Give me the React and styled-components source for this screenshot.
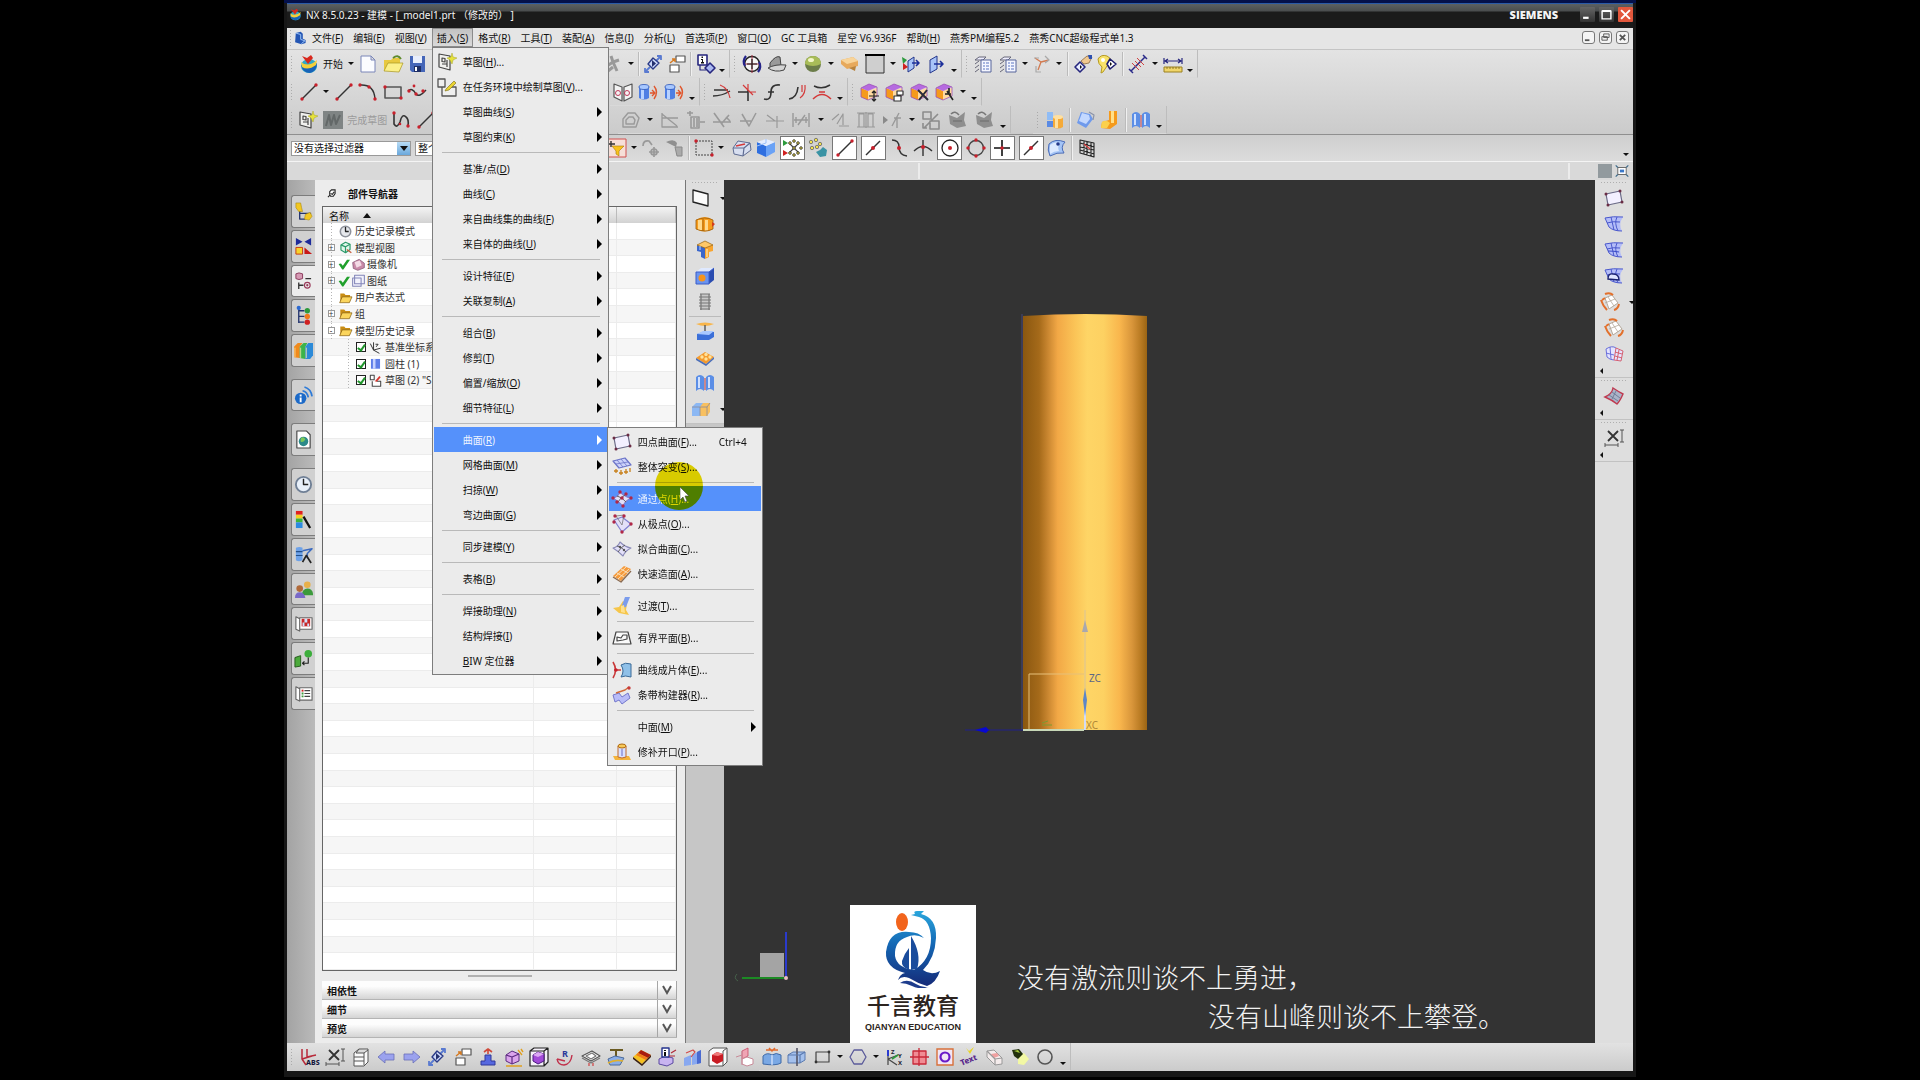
import styled, { createGlobalStyle } from "styled-components";

const GlobalStyle = createGlobalStyle`
  * {
    box-sizing: border-box;
  }
  body {
    margin: 0;
    background: #000;
    color: #111;
    font-family: "Noto Sans", "Noto Sans CJK SC", sans-serif;
    font-size: 10px;
  }
  button, select, input {
    font: inherit;
    color: inherit;
    margin: 0;
  }
`;

/* ---------- icons ---------- */

const Svg = styled.svg`
  display: block;
  flex: none;
  overflow: visible;
  width: ${(p) => p.$size || 20}px;
  height: ${(p) => p.$size || 20}px;
`;

const L = ({ d, c = "#333", f = "none", w = 1.2 }) => (
  <path d={d} stroke={c} fill={f} strokeWidth={w} strokeLinejoin="round" />
);
const Dot = ({ x, y, c = "#c8202c", r = 1.7 }) => <circle cx={x} cy={y} r={r} fill={c} />;

const sheet = "M2 6 16 3 18 14 4 17Z";
const cube = "M3 6 10 2 17 5V13L10 18 3 14Z";

const Pages = () => (
  <>
    <L d="M2 6 6 3H13L10 6ZM2 10 6 7M2 14 6 11M2 18 6 15" c="#667" f="#eef" w={1} />
    <L d="M8 6H18V18H8Z" c="#56659a" f="#f4f6ff" w={1} />
    <L d="M10 9H12M13 9H16M10 12H12M13 12H16M10 15H12M13 15H16" c="#5a74c0" w={1} />
  </>
);

const PurpleBox = ({ children }) => (
  <>
    <path d="M1 6 8 9V18L1 15Z" fill="#f59a1c" />
    <path d="M8 9 17 6V14L8 18Z" fill="#ffd9a0" />
    <path d="M1 6 9 2 17 5 8 9Z" fill="#b66be0" />
    <L d="M1 6 9 2 17 5 17 14 8 18 1 15Z" c="#9a4fb8" w={0.8} />
    {children}
  </>
);

const Diamond = ({ c = "#7f7fd0", children }) => (
  <>
    <L d="M1 9Q6 8 8 3Q13 8 19 9Q13 12 11 17Q6 12 1 9Z" c={c} f="#e3e0f8" w={1.1} />
    <L d="M5 7Q10 8 14 13M13 6Q9 8 6 13" c="#555" w={0.9} />
    {children}
  </>
);

const BlueSheet = ({ children }) => (
  <>
    <path d="M1 4Q9 2 19 3Q14 10 18 17Q9 17 5 13Z" fill="#b4bdf8" />
    <L d="M1 4Q9 2 19 3M3 9Q9 7 16 8M5 13Q9 17 18 17M1 4 5 13M7 3 10 16M13 3Q10 9 14 17" c="#4a58cc" w={1} />
    {children}
  </>
);

const Cylinder = () => (
  <>
    <path d="M1 5V16Q6 19 11 16V5Z" fill="#4f7fe4" />
    <path d="M3 5V17H6V5Z" fill="#b8d2ff" />
    <ellipse cx="6" cy="5" rx="5" ry="2.500" fill="#a8c8ff" stroke="#2c56b8" strokeWidth="0.8" />
    <L d="M12 11H17M14 8 17 11 14 14" c="#e0562c" w={1.4} />
    <L d="M16 4Q21 10 16 17" c="#e0562c" w={1.4} />
  </>
);

const art = {
  nx: (
    <>
      <ellipse cx="10" cy="12" rx="8" ry="7" fill="#2fa8c8" />
      <path d="M2 11Q9 17 18 9Q18 17 11 19Q4 19 2 11Z" fill="#1763b8" />
      <path d="M2 8Q9 14 18 6L17 11Q9 17 3 13Z" fill="#f3cf3a" />
      <path d="M3 2 8 4 12 1 14 4 9 10Z" fill="#d8281e" />
    </>
  ),
  part: (
    <>
      <path d="M4 3 11 1 14 4V11L18 13V17L12 19 3 16Z" fill="#2456b4" />
      <path d="M4 3 11 5V12L17 14L12 18" fill="none" stroke="#9cc4f8" strokeWidth="1.4" />
    </>
  ),
  newFile: <L d="M3 2H13L17 6V18H3ZM13 2V6H17" c="#7a86b8" f="#fbfcff" w={1} />,
  open: (
    <>
      <path d="M1 6H8L10 4H17V17H1Z" fill="#e8c940" />
      <path d="M1 17 5 9H20L16 18Z" fill="#fbf08a" stroke="#a89520" strokeWidth="0.7" />
      <L d="M10 4Q15 0 18 5" c="#5e8a2c" w={1.8} />
    </>
  ),
  save: (
    <>
      <path d="M3 2H18V18H5L3 16Z" fill="#4566b8" />
      <path d="M6 2H15V9H6Z" fill="#e8eefc" />
      <path d="M7 12H14V18H7Z" fill="#1e2f66" />
      <path d="M8 13H10V17H8Z" fill="#fff" />
    </>
  ),
  gear: <L d="M6 2 8 8 2 12M8 8 14 6M8 8 12 17M3 17 8 13" c="#999" w={3} />,
  link: (
    <>
      <L d="M2 18 7 13M13 7 18 2M14 2H18V6M2 14V18H6" c="#5a7ad0" w={1.8} />
      <L d="M10 4 16 9 10 15 5 10Z" c="#2a3a86" f="#cdd8fa" w={1.4} />
      <path d="M9 6 13 9.500 9 13Z" fill="#24306e" />
    </>
  ),
  boxes: (
    <>
      <L d="M9 2H18V8H9ZM3 11H12V18H3Z" c="#555" f="#fff" />
      <L d="M3 9 8 5M5 5H8V8" c="#d67a20" w={1.4} />
    </>
  ),
  info: (
    <>
      <L d="M2 1H11V11H2Z" c="#26267e" f="#fff" w={1.6} />
      <path d="M5 5H7V8H8V9.500H5V8H6V6H5ZM5.500 2.500H7V4H5.500Z" fill="#111" />
      <L d="M4 11V16H10" c="#26267e" />
      <L d="M14 9 19 14 14 19 9 14Z" c="#26267e" f="#aab8f0" w={1.6} />
    </>
  ),
  target: (
    <>
      <circle cx="10" cy="10" r="7.500" fill="#f5f5f5" stroke="#222" strokeWidth="1.500" />
      <L d="M10 1V19M1 10H19" c="#a33040" w={1} />
      <L d="M10 5V15M5 10H15" c="#222" w={1.2} />
      <L d="M4 2Q0 7 3 12M16 18Q20 13 17 8" c="#24248a" w={2.2} />
    </>
  ),
  hat: (
    <>
      <path d="M3 9Q9 1 13 3L14 12 3 13Z" fill="#9a9a9a" stroke="#444" />
      <path d="M1 14Q8 10 19 11L17 16Q8 19 1 14Z" fill="#d4d4d4" stroke="#444" />
    </>
  ),
  sphere: (
    <>
      <circle cx="10" cy="10" r="8" fill="#6c7d4a" />
      <path d="M2 10A8 8 0 0 1 18 10Q10 14 2 10Z" fill="#a8bc58" />
      <ellipse cx="8" cy="6" rx="3" ry="2" fill="#f2f6c8" />
    </>
  ),
  board: (
    <>
      <path d="M2 6 14 3 19 7V12L8 15 2 10Z" fill="#e7a95c" />
      <path d="M2 6 14 3 19 7 8 10Z" fill="#f8d49a" />
      <path d="M10 14 17 12 16 17Z" fill="#b8823c" />
    </>
  ),
  background: (
    <>
      <path d="M1 1H19V19H1Z" fill="#cfcfcf" stroke="#333" />
      <path d="M0 0H20V2H0Z" fill="#000" />
    </>
  ),
  doorIn: (
    <>
      <path d="M7 7 13 3V14L7 18Z" fill="#a8c4f8" stroke="#22348a" />
      <path d="M1 3 6 6 2 10Z" fill="#2c9a3c" />
      <path d="M2 9 7 13 2 16Z" fill="#d02020" />
      <L d="M11 9H18M15 6 18 9 15 12" c="#1c2f9a" w={1.6} />
    </>
  ),
  door: (
    <>
      <path d="M4 6 11 2V15L4 19Z" fill="#a8c4f8" stroke="#22348a" />
      <L d="M8 10H17M14 7 17 10 14 13" c="#1c2f9a" w={1.6} />
    </>
  ),
  layers: <Pages />,
  wcs: (
    <>
      <L d="M6 16 9 8 17 6M9 8 3 4" c="#d27a50" w={1.3} />
      <L d="M2 4H7M13 2 17 6 13 9M4 12V18H9" c="#a9a9a9" w={1.2} />
    </>
  ),
  hand: (
    <>
      <path d="M8 7 14 2 19 3 16 9 11 10Z" fill="#f0c890" stroke="#8a6a40" strokeWidth="0.8" />
      <path d="M15 1 19 1V5L16 5Z" fill="#2c50b0" />
      <L d="M7 8 12 13 7 18 2 13Z" c="#26267e" f="#e8edff" w={1.6} />
      <path d="M7 11 9 13 7 15Z" fill="#111" />
    </>
  ),
  bulb: (
    <>
      <path d="M1 5Q4 0 10 2Q14 4 14 7L10 12 6 18 4 19 5 13Q1 10 1 5Z" fill="#f8e26a" stroke="#b59a20" />
      <L d="M13 5 19 10 13 15 10 10Z" c="#1c1c6e" f="#fff" w={1.6} />
      <path d="M13 8 15 10 13 12Z" fill="#111" />
      <circle cx="6" cy="6" r="2" fill="#fff" />
    </>
  ),
  measure: (
    <>
      <L d="M3 17 17 3M1 15 5 19M15 1 19 5" c="#2c2c8a" w={1.5} />
      <L d="M4 9 11 16M7 7 13 13M9 4 16 11" c="#d04040" w={1} />
    </>
  ),
  ruler: (
    <>
      <L d="M1 4V10M19 4V10M2 7H18M5 5 2 7 5 9M15 5 18 7 15 9" c="#26267e" w={1.2} />
      <path d="M1 13H19V18H1Z" fill="#f0d56a" stroke="#9a8020" />
      <L d="M4 13V15M7 13V15M10 13V15M13 13V15M16 13V15" c="#7a6418" w={0.8} />
    </>
  ),
  line: (
    <>
      <L d="M3 17 17 3" w={1.5} />
      <Dot x={3} y={17} />
      <Dot x={17} y={3} />
    </>
  ),
  arc: (
    <>
      <L d="M2 3Q16 2 17 17" w={1.5} />
      <Dot x={2} y={3} />
      <Dot x={11} y={5} />
      <Dot x={17} y={17} />
    </>
  ),
  rect: (
    <>
      <L d="M2 5H18V16H2Z" c="#555" w={1.6} />
      <Dot x={2} y={5} />
      <Dot x={18} y={16} />
    </>
  ),
  spline: (
    <>
      <L d="M1 9Q5 5 9 12Q12 16 19 8" w={1.4} />
      <Dot x={2} y={9} />
      <Dot x={9} y={12} />
      <Dot x={7} y={4} r={1.4} />
      <Dot x={16} y={9} />
    </>
  ),
  mirror: (
    <>
      <L d="M1 2 9 5V19L1 15ZM11 5 19 2V15L11 19Z" c="#555" f="#f3f3f3" />
      <circle cx="5" cy="11" r="2.500" fill="none" stroke="#c03a5a" />
      <circle cx="14" cy="11" r="2.500" fill="none" stroke="#c03a5a" />
    </>
  ),
  cylinder: <Cylinder />,
  trimA: (
    <>
      <L d="M1 14Q10 14 18 9M2 8H16" w={1.4} />
      <L d="M8 3Q16 6 18 16" c="#d43a3a" />
    </>
  ),
  trimB: (
    <>
      <L d="M1 10H11M11 8V19" w={1.6} />
      <L d="M6 3 16 13M11 2V9M12 10H19" c="#d43a3a" />
    </>
  ),
  curveS: <L d="M2 17Q9 19 9 10Q9 2 18 3M6 10H12" w={1.6} />,
  offset: (
    <>
      <L d="M2 17Q10 16 11 5" w={1.6} />
      <L d="M15 3V10M18 3Q19 12 13 16" c="#d43a3a" />
    </>
  ),
  bridge: (
    <>
      <L d="M2 4Q10 8 18 3" w={1.5} />
      <L d="M1 17Q10 8 19 17M7 10H13" c="#d43a3a" w={1.5} />
    </>
  ),
  boxMove: (
    <PurpleBox>
      <L d="M14 9V19M9 14H19M12 11 14 9 16 11M12 17 14 19 16 17" c="#222" w={1.2} />
    </PurpleBox>
  ),
  boxRect: (
    <PurpleBox>
      <L d="M12 9H18V13H12ZM9 14H16V19H9Z" c="#333" f="#fff" />
    </PurpleBox>
  ),
  boxCut: (
    <PurpleBox>
      <L d="M8 8 18 18M17 8 9 18" c="#2a2a3a" w={2} />
    </PurpleBox>
  ),
  boxWand: (
    <PurpleBox>
      <L d="M12 9 18 18M10 12H16M14 6V11" c="#222" w={1.6} />
    </PurpleBox>
  ),
  sketch: (
    <>
      <L d="M2 2 13 4V18L2 15ZM5 6 8 6.500V10L5 9.500ZM5 12H10M10 8V15" c="#444" f="#f0f0ee" w={1.2} />
      <path d="M15 1 16 5 20 6 16 8 15 12 13 8 10 6 14 5Z" fill="#e6e23a" stroke="#a9a520" strokeWidth="0.5" />
    </>
  ),
  sketchTask: (
    <>
      <L d="M1 2H8V10H1ZM5 10V19H19V10H12" c="#555" f="#efefef" w={1.3} />
      <path d="M9 12 17 4 19 6 12 13 8 14Z" fill="#e9d332" stroke="#776a10" strokeWidth="0.6" />
    </>
  ),
  finish: (
    <>
      <path d="M0 1H20V19H0Z" fill="#7f8484" />
      <L d="M3 16 6 5 8 15 11 5 13 14 17 5" c="#636868" w={2} />
    </>
  ),
  zigzag: (
    <>
      <L d="M2 4V14Q5 19 8 12Q10 3 14 7Q17 9 16 16" w={1.6} />
      <Dot x={2} y={3} />
      <Dot x={16} y={16} />
      <Dot x={8} y={14} r={1.3} />
    </>
  ),
  polyG: <L d="M2 17V9L7 3H14L18 8 15 17ZM5 14V10L8 7H12L14 10 13 14Z" c="#9a9a9a" w={1.4} />,
  angleG: <L d="M2 3V17H18M2 4 17 16M2 8H18" c="#999" w={1.3} />,
  blockG: <L d="M5 7H13V18H5ZM14 12H19M1 3H7M4 1V6M8 8V17M11 8V17" c="#999" w={1.6} />,
  cutG: <L d="M2 3 12 17M1 12H19M17 5 10 13M14 7 18 11" c="#999" w={1.6} />,
  trimG: <L d="M3 4 10 16 17 3M1 11H12" c="#999" w={1.5} />,
  extG: <L d="M2 5 10 11M1 11H19M12 6V18" c="#999" w={1.2} />,
  dimG: <L d="M2 3V17M18 3V17M3 10H17M5 7V13M15 7V13M7 15 14 5" c="#999" w={1.4} />,
  perpG: <L d="M2 10 9 4M7 14 13 4V15M9 16H19" c="#999" w={1.2} />,
  frameG: <L d="M3 4H8V17H3ZM12 4H17V17H12ZM1 3H19M10 2V18M1 17H19" c="#999" w={1.2} />,
  symG: (
    <>
      <path d="M1 6 6 10 1 14Z" fill="#8a8a8a" />
      <L d="M10 16 17 3M15 8V18M12 8H19" c="#999" w={1.4} />
    </>
  ),
  gridG: <L d="M2 2H10V9H2ZM9 11H18V19H9ZM3 18 17 4M2 13V18H6" c="#8c8c8c" w={1.6} />,
  carG: (
    <>
      <path d="M2 5 10 8 18 2 17 10 19 16 10 18 3 14Z" fill="#8e8e8e" />
      <L d="M4 4Q8 0 12 5M6 11H15" c="#777" w={1.6} />
    </>
  ),
  orangeBlue: (
    <>
      <path d="M2 2H8V10H2Z" fill="#8fbcf6" />
      <path d="M2 11H9V17H2Z" fill="#5a8ae4" />
      <path d="M8 7H18V17Q13 20 8 17Z" fill="#f5aa38" />
      <path d="M10 8H13V18H10Z" fill="#ffdf9c" />
      <ellipse cx="13" cy="7" rx="5" ry="2" fill="#ffe0a0" />
    </>
  ),
  blueTilt: (
    <>
      <path d="M5 2 14 4 17 9 10 18 1 13Z" fill="#6f9aec" />
      <path d="M6 3 13 5 14 9 10 14 3 11Z" fill="#c3d8ff" />
      <L d="M13 2 18 5 17 10" c="#8a93a8" />
    </>
  ),
  orangeBoot: (
    <>
      <path d="M9 1H17V14L10 19 1 18 2 12 9 10Z" fill="#f59a1c" />
      <path d="M11 1H14V13H11Z" fill="#ffe08a" />
      <path d="M2 12Q6 9 10 13L7 18 1 18Z" fill="#fbd04c" />
    </>
  ),
  bluePair: (
    <>
      <path d="M1 4Q5 0 9 4V18Q5 14 1 18Z" fill="#5b8ee6" />
      <path d="M11 4Q15 0 19 4V18Q15 14 11 18Z" fill="#5b8ee6" />
      <path d="M3 4H5V15H3ZM13 4H15V15H13Z" fill="#cfe0ff" />
      <path d="M9 5H11V17H9Z" fill="#bfc6d6" />
      <L d="M10 5V17" c="#d04a4a" w={1} />
    </>
  ),
  filter: (
    <>
      <path d="M0 1H19V19H0Z" fill="#f6dfd8" stroke="#d05050" />
      <path d="M5 8H17L12 13V18L9 16V13Z" fill="#f8c21c" stroke="#a8780c" strokeWidth="0.6" />
      <L d="M4 3V9M1 6H8" c="#333" w={1.4} />
    </>
  ),
  moveG: <L d="M2 8Q2 2 8 3L11 7M13 9V19M8 14H18M13 11A3 3 0 1 0 13 17A3 3 0 1 0 13 11" c="#999" w={1.7} />,
  stackG: (
    <>
      <path d="M2 4Q10 0 13 5L12 9 8 7Z" fill="#8f8f8f" />
      <path d="M11 9H18V18H13Z" fill="#aaa" stroke="#888" />
    </>
  ),
  marquee: (
    <>
      <path d="M2 3H18V17H2Z" fill="none" stroke="#444" strokeDasharray="2 1" />
      <Dot x={2} y={3} />
      <Dot x={18} y={17} />
    </>
  ),
  shaded: (
    <>
      <path d="M1 10 6 3 18 5 19 12 11 18 2 16Z" fill="#d8dff0" stroke="#5f6c92" />
      <L d="M1 10 12 10 18 5M12 10 11 18" c="#5f6c92" />
      <L d="M4 8 13 6" c="#d43a3a" w={1.6} />
    </>
  ),
  blueCube: (
    <>
      <path d="M1 4 10 8V19L1 15Z" fill="#2f6fe0" />
      <path d="M10 8 19 4V14L10 19Z" fill="#6aa2f6" />
      <path d="M1 4 10 1 19 4 10 8Z" fill="#e4edff" />
      <L d="M10 1V5L1 8" c="#9cc0f8" w={1} />
    </>
  ),
  snap: (
    <>
      <path d="M1 2 6 5 1 8Z" fill="#2c9a3c" />
      <path d="M1 12 6 15 1 18Z" fill="#d02020" />
      <L d="M7 5 17 15M17 5 7 15" c="#444" w={1.2} />
      {[[8, 5], [16, 5], [12, 10], [8, 15], [16, 15], [19, 10], [12, 3], [12, 17]].map(([x, y]) => (
        <circle key={`${x}-${y}`} cx={x} cy={y} r="1.300" fill="#f4e24a" stroke="#222" strokeWidth="0.8" />
      ))}
    </>
  ),
  snapHand: (
    <>
      {[[3, 4], [8, 2], [12, 6], [4, 10], [9, 9]].map(([x, y]) => (
        <circle key={`${x}-${y}`} cx={x} cy={y} r="1.700" fill="#f4e24a" stroke="#666" strokeWidth="0.8" />
      ))}
      <path d="M8 14 12 12 15 9 19 12 18 18 12 19Z" fill="#3a93a4" />
    </>
  ),
  midPoint: (
    <>
      <L d="M3 17 17 3" w={1.4} />
      <Dot x={10} y={10} r={2} />
    </>
  ),
  controlPt: (
    <>
      <L d="M2 2Q9 2 9 9Q9 17 17 18" w={1.4} />
      <Dot x={9} y={10} r={2} />
    </>
  ),
  crossPt: (
    <>
      <L d="M10 2V18M1 13Q10 4 19 13" w={1.4} />
      <Dot x={10} y={9} r={2} />
    </>
  ),
  centerPt: (
    <>
      <circle cx="10" cy="10" r="8" fill="none" stroke="#222" strokeWidth="1.300" />
      <Dot x={10} y={10} r={2} />
    </>
  ),
  quadPt: (
    <>
      <circle cx="10" cy="10" r="7.500" fill="none" stroke="#444" strokeWidth="1.400" />
      <Dot x={10} y={2} />
      <Dot x={10} y={18} />
      <Dot x={2} y={10} />
      <Dot x={18} y={10} />
    </>
  ),
  plusPt: (
    <>
      <L d="M10 2V18M2 10H18" c="#111" w={1.6} />
      <Dot x={10} y={10} r={1.8} />
    </>
  ),
  facePt: (
    <>
      <path d="M2 6Q8 0 18 4Q13 9 17 15Q10 14 3 18Q0 12 2 6Z" fill="#a4c4f6" stroke="#4a6cb8" />
      <path d="M3 7Q8 3 13 5Q10 9 12 13Q7 13 3 16Z" fill="#dce9ff" />
      <Dot x={11} y={6} c="#24388a" r={1.8} />
    </>
  ),
  meshPt: (
    <>
      <L d="M3 2 17 5V19L3 15ZM3 5 17 9M3 9 17 12M3 12 17 16M7 3V17M10 3V17M14 4V18" c="#222" w={1.1} />
      <L d="M7 6 13 11" c="#d43a3a" />
    </>
  ),
  plane: <L d="M2 2 17 6V18L2 14Z" c="#222" f="#fbfbfb" w={1.3} />,
  orangeDrum: (
    <>
      <path d="M1 6Q10 0 18 6V15Q10 20 1 15Z" fill="#f79c1c" />
      <path d="M3 6H7V16H3ZM10 6H13V17H10Z" fill="#ffd98c" />
      <L d="M1 6Q10 2 18 6V15Q10 19 1 15ZM8 5V17" c="#9a5a08" w={0.8} />
      <path d="M17 8 20 10 17 13Z" fill="#d43a1a" />
    </>
  ),
  revolve: (
    <>
      <path d="M2 5 10 7V19L6 17V12L2 11Z" fill="#3b67cc" />
      <path d="M10 7 18 5V11L14 12V17L10 19Z" fill="#f8a530" />
      <path d="M2 5 10 1 18 5 10 8Z" fill="#ffc868" stroke="#96600c" strokeWidth="0.7" />
      <L d="M12 9V17" c="#ffe9b8" />
      <L d="M5 6V10" c="#a8c4f8" />
    </>
  ),
  hole: (
    <>
      <path d="M1 6 14 6V18H1Z" fill="#6a94f0" />
      <path d="M1 6 6 2H19L14 6Z" fill="#dfe9ff" />
      <path d="M14 6 19 2V14L14 18Z" fill="#2a4cb0" />
      <L d="M1 6H14V18H1ZM14 6 19 2" c="#3a5cc8" w={1} />
      <circle cx="7" cy="12" r="3.500" fill="#f7941c" />
    </>
  ),
  thread: (
    <>
      <path d="M5 2H15V18H5Z" fill="#c9c9c9" />
      <L d="M5 2H15M4 5H16M4 8H16M4 11H16M4 14H16M5 17H15M6 2V18M14 2V18" c="#777" w={1.2} />
    </>
  ),
  emboss: (
    <>
      <path d="M1 3Q10 0 19 3Q10 7 1 3Z" fill="#f8b54a" />
      <L d="M10 4V12" c="#666" w={1.6} />
      <path d="M2 13 8 11H19V16L14 19H2Z" fill="#3b6fd8" />
      <path d="M2 13 8 10H19L14 14Z" fill="#a8c8ff" />
    </>
  ),
  pattern: (
    <>
      <path d="M1 11 10 5 19 10 11 17Z" fill="#f59a2c" />
      <path d="M1 11 11 17V19L1 13ZM11 17 19 10V12L11 19Z" fill="#4c6fb8" />
      <Dot x={7} y={10} c="#ffe29a" />
      <Dot x={11} y={12} c="#ffe29a" />
      <Dot x={11} y={7.5} c="#ffe29a" />
      <Dot x={15} y={10} c="#ffe29a" />
    </>
  ),
  unite: (
    <>
      <path d="M1 8 5 4H12V15L8 17H1Z" fill="#8cb8f4" />
      <path d="M9 8 12 4H19V13L16 17H9Z" fill="#f8c060" />
      <L d="M1 8H16V17M16 8 19 4M9 8V17" c="#8a8a9a" w={0.8} />
    </>
  ),
  fourPoint: (
    <>
      <L d={sheet} c="#6a6a86" f="#f3f0ff" w={1.2} />
      <Dot x={2} y={6} c="#6a2c44" r={1.5} />
      <Dot x={16} y={3} c="#6a2c44" r={1.5} />
      <Dot x={18} y={14} c="#6a2c44" r={1.5} />
      <Dot x={4} y={17} c="#6a2c44" r={1.5} />
    </>
  ),
  ruled: <BlueSheet />,
  through: (
    <BlueSheet>
      <L d="M4 11Q10 11 15 12" c="#3b4cc8" />
    </BlueSheet>
  ),
  section: (
    <BlueSheet>
      <path d="M4 13Q4 7 9 8Q15 8 15 14Z" fill="#dfe5ff" stroke="#1c2370" strokeWidth="1.400" />
    </BlueSheet>
  ),
  sweep: (
    <>
      <path d="M5 6 12 3 18 11 9 17Z" fill="#fff" stroke="#b4a89a" />
      <L d="M8 5 14 14M5 11 15 7" c="#b4a89a" w={0.8} />
      <L d="M5 2Q10 0 13 3M1 8Q3 14 7 18M14 18Q18 17 19 12M2 8 5 6" c="#e2702c" w={2} />
    </>
  ),
  redMesh: (
    <>
      <path d="M2 5Q10 1 19 7L17 17Q9 18 3 13Z" fill="#e4e4ff" />
      <L d="M2 5Q8 1 12 4M2 5 3 13Q6 16 10 16M6 3 7 15M2 9 10 11" c="#6a70dc" w={1} />
      <L d="M12 4 19 7 17 17 10 16ZM15 6 13 16M11 8 18 10M11 12 18 14" c="#d46070" w={1} />
    </>
  ),
  offsetSurf: (
    <>
      <path d="M1 11Q8 8 9 2Q15 6 19 8Q16 15 13 18Q8 14 1 11Z" fill="#aab4c8" stroke="#c03a50" strokeWidth="1.400" />
      <L d="M5 9 14 15M8 6 16 12M12 5 8 13" c="#6c7894" w={0.9} />
    </>
  ),
  xDim: (
    <>
      <L d="M4 3 14 13M14 3 4 13" c="#333" w={1.8} />
      <L d="M1 17H14M1 15V19M14 15V19M18 2V14M16 2H20M16 14H20" c="#555" w={1} />
    </>
  ),
  transition: (
    <>
      <path d="M11 5 15 8 14 14 17 19 7 17 1 12 7 11Z" fill="#f6c64a" />
      <path d="M13 1 18 1 14 11 9 12Z" fill="#7b9cec" />
      <path d="M9 10 12 9 13 17 9 16Z" fill="#ffe08c" />
    </>
  ),
  globalShape: (
    <>
      <L d="M1 4 13 1 19 8 7 11Z" c="#6b74c8" f="#ccd2fa" />
      <L d="M5 3 11 10M9 2 15 9M4 7 16 5" c="#6b74c8" w={0.8} />
      <L d="M4 12V16M9 13V18M14 12V17M18 11V15M2 14H6M7 16H11M12 15H16" c="#c8801c" w={1.3} />
    </>
  ),
  throughPts: (
    <Diamond>
      {[[1, 9], [8, 3], [19, 9], [11, 17], [10, 9], [5, 13], [14, 5]].map(([x, y]) => (
        <Dot key={x} x={x} y={y} c="#b02848" />
      ))}
    </Diamond>
  ),
  fromPoles: (
    <>
      <L d="M2 6 10 3 19 10 10 18Z" c="#7f7fd0" f="#e3e0f8" />
      <L d="M4 2 12 1 10 11Z" c="#777" w={0.8} />
      <Dot x={3} y={2} c="#b02848" />
      <Dot x={12} y={2} c="#b02848" />
      <Dot x={2} y={8} c="#b02848" />
      <Dot x={19} y={10} c="#b02848" />
      <Dot x={10} y={18} c="#b02848" />
    </>
  ),
  fit: (
    <Diamond c="#8a8ab8">
      <Dot x={8} y={8} c="#555" r={1.2} />
      <Dot x={12} y={11} c="#555" r={1.2} />
    </Diamond>
  ),
  rapid: (
    <>
      <path d="M1 12 12 2 19 5 9 17Z" fill="#f59a3c" />
      <L d="M3 13 14 3M6 15 17 5M5 9 12 13M9 5 16 9" c="#fbe0b8" w={1} />
      <L d="M1 13 9 18 19 7" c="#8a6a50" w={1.3} />
    </>
  ),
  bounded: <L d="M4 4H16L19 16H1ZM5 13V9L9 10 11 7 15 7V11L11 12Z" c="#444" f="#fafafa" w={1.2} />,
  curveSheet: (
    <>
      <path d="M9 5Q13 2 19 4V17Q13 15 9 17Q13 11 9 5Z" fill="#8fc0e8" stroke="#3a6a98" />
      <L d="M1 2Q6 10 1 18M2 10H9" c="#c83a3a" w={1.6} />
      <Dot x={4} y={10} />
    </>
  ),
  ribbon: (
    <>
      <path d="M1 10 7 8 10 12 16 8 18 13 10 19 7 15 3 17Z" fill="#b8bcf8" stroke="#7478cc" />
      <L d="M4 8Q10 6 13 5L17 2" c="#d06a3a" w={1.4} />
      <Dot x={17} y={3} c="#c83a3a" />
    </>
  ),
  patch: (
    <>
      <path d="M1 14H17L19 18H3Z" fill="#f4b43c" />
      <path d="M6 4V15Q10 17 14 15V4Z" fill="#d9e0ff" stroke="#c06a2c" />
      <ellipse cx="10" cy="4" rx="4" ry="2" fill="#f6c95a" stroke="#b06a10" />
      <L d="M10 7V14" c="#7c80d0" />
    </>
  ),
  cueView: (
    <>
      <L d="M4 5H16V15H4Z" c="#555" f="#fff" />
      <path d="M7 8H13V12H7Z" fill="#3b78c8" />
      <L d="M1 2 4 5M19 2 16 5M1 18 4 15M19 18 16 15" c="#3b6a8a" w={1.6} />
    </>
  ),
  /* resource bar */
  assembly: (
    <>
      <L d="M6 8V18H12M6 12H18" c="#23346e" w={1.4} />
      <path d="M2 1 7 1 8 6 9 10 5 10 2 6ZM12 13 17 11 19 15 16 19 11 18Z" fill="#f2c722" stroke="#a8860c" strokeWidth="0.6" />
    </>
  ),
  constraint: (
    <>
      <path d="M2 1 9 5 2 9ZM18 1 11 5 18 9Z" fill="#1c2a9a" />
      <path d="M2 11H9V18H2Z" fill="#f6d32c" stroke="#c83a10" />
      <path d="M11 11 19 18H11Z" fill="#c81818" />
    </>
  ),
  partNav: (
    <>
      <path d="M2 3V8Q5 10 9 8V3Q5 1 2 3Z" fill="#d69ab4" stroke="#8a3a5c" />
      <L d="M12 8H18M5 12V19M5 15H10" c="#333" w={1.4} />
      <circle cx="14" cy="15" r="3" fill="none" stroke="#9a3a5a" strokeWidth="1.200" />
      <Dot x={14} y={15} c="#9a3a5a" r={1.2} />
    </>
  ),
  reuse: (
    <>
      <L d="M5 2V18M5 5H11M5 11H11M5 17H11" c="#23346e" w={1.4} />
      <Dot x={5} y={2} c="#2c6ad0" r={2.2} />
      <Dot x={14} y={5} c="#2c9a3c" r={2.8} />
      <Dot x={14} y={11} c="#f07a1c" r={2.8} />
      <Dot x={14} y={17} c="#d02020" r={2.8} />
    </>
  ),
  library: (
    <>
      <path d="M0 6 4 2H9L6 6V18L0 17Z" fill="#f08a1c" />
      <path d="M6 6 10 2H14L12 6V19L6 18Z" fill="#3cb44a" />
      <path d="M12 6 15 2H20V15L17 19H12Z" fill="#2c8ad8" />
      <L d="M1 7V17M7 7V18M13 7V18" c="#fbe9a8" w={0.8} />
    </>
  ),
  hd3d: (
    <>
      <circle cx="7" cy="13" r="6" fill="#1c6ac8" />
      <path d="M6 9H8V11H6ZM6 12H8V17H6Z" fill="#fff" />
      <L d="M9 5Q14 6 15 12M11 1Q18 3 19 11" c="#2c7ad8" w={1.8} />
    </>
  ),
  web: (
    <>
      <L d="M3 1H13L17 5V19H3Z" c="#444" f="#fff" />
      <circle cx="10" cy="12" r="5" fill="#2c8a8a" />
      <path d="M7 9Q10 6 12 10 9 14 7 12Z" fill="#7cc85a" />
    </>
  ),
  clock: (
    <>
      <circle cx="10" cy="10" r="8" fill="#e8f0fa" stroke="#6f7f95" strokeWidth="2" />
      <L d="M10 4V10H15" c="#222" w={1.5} />
    </>
  ),
  palette: (
    <>
      <path d="M2 1H9V5H2Z" fill="#e02020" />
      <path d="M2 5H9V9H2Z" fill="#f5d020" />
      <path d="M2 9H9V13H2Z" fill="#3cb43c" />
      <path d="M2 13H9V19H2Z" fill="#2c8ae0" />
      <L d="M10 7 17 19" c="#111" w={2.4} />
    </>
  ),
  process: (
    <>
      <path d="M2 3Q6 1 9 3V16Q5 18 2 16Z" fill="#6ea2e8" />
      <L d="M9 6 19 4 14 9V14" c="#3a6ac0" w={1.6} />
      <L d="M9 18 13 11 18 19" c="#222" w={1.8} />
      <L d="M2 7H9M2 11H9" c="#24508a" />
    </>
  ),
  roles: (
    <>
      <circle cx="14" cy="5" r="3.500" fill="#e8b04a" />
      <path d="M8 16Q9 9 14 9T20 14V16Z" fill="#3c9a3c" />
      <circle cx="6" cy="9" r="3.500" fill="#b06a3a" />
      <path d="M1 19Q1 13 6 13T12 19Z" fill="#7a6ac8" />
    </>
  ),
  poster: (
    <>
      <L d="M2 3 6 5V18L2 16ZM6 4H19V16H6Z" c="#666" f="#fff" />
      <path d="M8 5H17V13H8Z" fill="#c82828" />
      <path d="M11 5H14V9H11ZM9 9H11V13H9ZM14 10H16V13H14Z" fill="#cfe4ff" />
    </>
  ),
  exit: (
    <>
      <path d="M1 9 7 7V18L1 19Z" fill="#4caa3c" stroke="#245a1c" />
      <circle cx="15" cy="5" r="4" fill="#3cae3c" />
      <L d="M15 9V15H9M11 13 9 15 11 17" c="#222" />
    </>
  ),
  form: (
    <>
      <L d="M2 3 6 5V18L2 16ZM6 4H19V17H6Z" c="#666" f="#fff" />
      <L d="M11 7H17M11 10H17M11 13H17" c="#444" />
      <path d="M8 6H10V8H8Z" fill="#d02020" />
      <path d="M8 9H10V11H8ZM8 12H10V14H8Z" fill="#3c9a3c" />
    </>
  ),
  /* part navigator */
  history: (
    <>
      <circle cx="10" cy="10" r="8" fill="#e6e8ec" stroke="#8f939c" strokeWidth="2.400" />
      <L d="M10 3V10H15" c="#222" w={2} />
    </>
  ),
  modelView: (
    <>
      <L d={cube} c="#2c9a6a" f="#e0f6ec" w={1.8} />
      <L d="M3 6 10 9 17 5M10 9V18" c="#2c9a6a" w={1.8} />
      <L d="M12 13 19 18" c="#c85a3a" w={2} />
    </>
  ),
  tick: <path d="M1 10 5 9 8 13 15 3 20 3 9 19H7Z" fill="#20a02c" />,
  camera: (
    <>
      <path d="M1 7 11 2 19 8V15L9 19 2 16Z" fill="#c88aa8" stroke="#7a4a6a" />
      <path d="M4 6 12 4 15 11 7 15Z" fill="#f3dbe6" />
    </>
  ),
  drawing: <L d="M4 2H19V15H4ZM1 6H14V19H1Z" c="#8285b8" f="#f2f2fc" w={1.6} />,
  folder: (
    <>
      <path d="M2 4H8L10 6H17V17H2Z" fill="#c98d14" />
      <path d="M1 18 5 9H20L16 18Z" fill="#fbd55c" stroke="#7a5408" />
    </>
  ),
  csys: <L d="M7 14V2M7 14 18 11M7 14 16 19M2 4 7 14M10 5H14L11 9" c="#333" w={1.5} />,
  bluePillar: (
    <>
      <path d="M3 3H17V18H3Z" fill="#5f7ee8" />
      <path d="M6 3H10V18H6Z" fill="#c6d2ff" />
    </>
  ),
  sketchNode: (
    <>
      <L d="M2 2H8V9H2ZM5 11V19H18V11H12" c="#444" f="#fff" w={1.6} />
      <path d="M9 11 16 3 18 5 12 12Z" fill="#d8342c" />
    </>
  ),
  /* bottom toolbar */
  abs: (
    <>
      <L d="M2 2V12L12 9M2 12 6 18M7 2V10M7 10 16 8" c="#b82a3a" w={1.5} />
      <text x="6" y="18" fontSize="7" fontWeight="800" fill="#16163c">ABS</text>
    </>
  ),
  list: <L d="M3 6 8 2H17V15L13 19H3ZM3 10H13M3 14H13M13 6V18M8 2 5 6H13L17 3" c="#555" f="#fafafa" w={1} />,
  back: <path d="M2 10 9 4V7H18V13H9V16Z" fill="#9ba2ee" stroke="#6a70b8" strokeWidth="0.8" />,
  forward: <path d="M18 10 11 4V7H2V13H11V16Z" fill="#9ba2ee" stroke="#6a70b8" strokeWidth="0.8" />,
  stamp: (
    <>
      <path d="M7 8H13V14H17V18H3V14H7Z" fill="#5668e0" stroke="#30389a" />
      <L d="M10 2V7M6 5 10 2 14 5" c="#d04a3a" w={1.6} />
    </>
  ),
  purpleEx: (
    <>
      <path d="M2 8 8 4 15 7V14L8 17 2 14Z" fill="#dba4ec" stroke="#5c2a80" />
      <L d="M2 8 8 10 15 7M8 10V17" c="#5c2a80" />
      <L d="M2 19H18M17 2 19 5M14 3 18 8" c="#e0a020" w={1.4} />
    </>
  ),
  purpleSel: (
    <>
      <L d="M1 4 5 1H19V15L15 19H1ZM1 4H15V19M15 4 19 1" c="#222" f="#f4f0f8" />
      <path d="M4 8 9 5 15 7V14L9 17 4 14Z" fill="#a24ad8" stroke="#4a1a80" />
      <path d="M4 8 9 5 15 7 9 10Z" fill="#dca8f4" />
    </>
  ),
  rArc: (
    <>
      <L d="M2 12Q3 18 9 18Q16 17 17 8M10 14 2 12" c="#c0304a" w={1.4} />
      <text x="7" y="10" fontSize="9" fontWeight="700" fill="#2a3a9a">R</text>
    </>
  ),
  planes: (
    <>
      <L d="M1 9 11 4 19 9 10 14Z" c="#555" f="#fff" />
      <L d="M5 9 11 6 15 9 10 12ZM1 11 10 16 19 11" c="#777" />
      <L d="M8 16V19M12 16V19" c="#d04040" />
    </>
  ),
  pivot: (
    <>
      <L d="M4 3H17M10 3V11" c="#6a5a20" w={2} />
      <path d="M2 12 9 9 18 11 14 18H4Z" fill="#8aaee8" stroke="#4a6a9a" />
      <L d="M2 16Q9 12 17 14" c="#e0b030" w={1.6} />
    </>
  ),
  stripes: (
    <>
      <path d="M1 10 9 3 19 8 10 17Z" fill="#f5c020" />
      <path d="M6 6 9 3 19 8 16 11Z" fill="#a81c10" />
      <path d="M4 8 6 6 16 11 14 13Z" fill="#f07a1c" />
      <path d="M1 10 10 17V19L1 12ZM10 17 19 8V10L10 19Z" fill="#3a2010" />
    </>
  ),
  infoBox: (
    <>
      <path d="M2 12 8 9 16 11V16L10 19 2 17Z" fill="#c8b4f0" stroke="#5a48a0" />
      <L d="M5 1H12V10H5Z" c="#26348e" f="#fff" w={1.4} />
      <L d="M8 3V4M8 5V9" c="#111" w={2} />
      <L d="M14 6 19 3M12 9 18 9" c="#b02838" />
    </>
  ),
  ramp: (
    <>
      <path d="M1 11 8 8V18L1 19ZM9 8 18 3V16L9 18Z" fill="#88a8f0" />
      <L d="M3 6 10 3 12 5 8 10" c="#d04a4a" w={1.2} />
      <path d="M14 5 18 3V16L14 17Z" fill="#4a6ad0" />
    </>
  ),
  redCube: (
    <>
      <L d="M1 4 5 1H19V15L15 19H1ZM15 4V19M15 4 19 1" c="#555" f="#fafafa" w={1} />
      <path d="M4 8 9 5 15 7V14L9 17 4 14Z" fill="#c81c24" />
      <path d="M4 8 9 5 15 7 10 9Z" fill="#f07a7a" />
    </>
  ),
  pinkFlag: (
    <>
      <path d="M8 4 14 1V9L8 12Z" fill="#f0a4b4" stroke="#c84a64" strokeWidth="0.8" />
      <L d="M8 4V18M2 10 8 8M8 12 13 10 19 12V17L13 19 8 17Z" c="#c88a98" f="#fff" w={1} />
    </>
  ),
  bluePan: (
    <>
      <path d="M1 9Q5 5 10 8Q14 5 19 8V16Q14 19 1 17Z" fill="#7aa8e4" stroke="#3f6aa8" />
      <L d="M10 8V18" c="#dfe9ff" />
      <L d="M4 3H16M7 1 10 4 13 1" c="#e06a2c" w={1.5} />
    </>
  ),
  blueSplit: (
    <>
      <path d="M1 8 6 5H18V13L13 16H1Z" fill="#a4c0ec" stroke="#5a7ab0" />
      <L d="M10 1V19" c="#556" w={1.6} />
      <L d="M1 8H13L18 5M13 8V16" c="#5a7ab0" />
    </>
  ),
  box: (
    <>
      <L d="M4 5H17V15H4Z" c="#444" w={1.2} />
      <Dot x={4} y={15} c="#333" r={1.4} />
      <Dot x={17} y={5} c="#333" r={1.4} />
    </>
  ),
  hexagon: <L d="M6 3H14L18 10 14 17H6L2 10Z" c="#5a5a9a" w={1.3} />,
  axes: (
    <>
      <L d="M4 18V4M4 12 14 8M4 12 13 18" c="#444" w={1.2} />
      <L d="M8 12 14 8" c="#2c9a3c" w={1.6} />
      <L d="M4 9V3" c="#2a3ad0" w={2} />
      <text x="7" y="7" fontSize="6" fontWeight="700" fill="#223">Z</text>
      <text x="14" y="11" fontSize="6" fontWeight="700" fill="#223">Y</text>
      <text x="14" y="18" fontSize="6" fontWeight="700" fill="#223">X</text>
    </>
  ),
  redGrid: (
    <>
      <path d="M4 4H17V17H4Z" fill="#f08c94" />
      <L d="M4 4H17V17H4ZM10 1V19M1 10H20" c="#c82838" w={1.3} />
    </>
  ),
  purpleO: (
    <>
      <path d="M2 2H18V18H2Z" fill="#f2e6f4" stroke="#d8703a" strokeWidth="1.400" />
      <circle cx="10" cy="10" r="4.500" fill="none" stroke="#6a1ac8" strokeWidth="2.200" />
    </>
  ),
  textTool: (
    <>
      <text x="0" y="16" fontSize="8" fontWeight="800" fill="#5a2a8c" transform="rotate(-22 8 13)">Text</text>
      <path d="M6 1 9 4 14 0 10 7Z" fill="#e8d428" />
    </>
  ),
  eraser: (
    <>
      <path d="M2 4 9 3 17 11V17L10 18 2 10Z" fill="#f4ecec" stroke="#999" />
      <path d="M6 7 12 6 14 9 9 11Z" fill="#f0a0a0" />
      <L d="M2 4 10 12V18M10 12 17 11" c="#999" />
    </>
  ),
  lamp: (
    <>
      <path d="M8 8 14 6 19 12 14 18 8 17Z" fill="#f2f8a4" />
      <path d="M2 3 9 2 13 7 8 12 4 9Z" fill="#22300c" />
      <path d="M4 4 8 3 10 6Z" fill="#a8cc3c" />
    </>
  ),
  ring: <circle cx="10" cy="10" r="7" fill="none" stroke="#555" strokeWidth="1.600" />,
};

const Icon = ({ name, size }) => (
  <Svg viewBox="0 0 20 20" $size={size} aria-hidden="true">
    {art[name]}
  </Svg>
);

/* ---------- window frame ---------- */

const Screen = styled.div`
  min-height: 100vh;
  padding: 0 284px;
  display: flex;
  background: #000;
`;

const Window = styled.main`
  flex: 1;
  min-width: 0;
  display: flex;
  flex-direction: column;
  height: calc(100vh - 3px);
  min-height: 900px;
  padding: 0 3px 6px;
  background: #171717;
  border-top: 3px solid #04104a;
`;

const TitleBar = styled.header`
  display: flex;
  align-items: center;
  height: 25px;
  padding: 0 0 4px 2px;
  color: #f4f4f4;
  border-top: 1px solid #2a5aa8;
  background: linear-gradient(#5c6062 0, #4a4d4e 7px, #1b1b1b 8px, #1b1b1b 100%);
`;

const Title = styled.h1`
  flex: 1;
  margin: 0 0 0 4px;
  font-size: 10px;
  font-weight: 400;
  white-space: pre;
`;

const Brand = styled.span`
  margin-right: 22px;
  font: 800 11px "Open Sans", sans-serif;
`;

const FrameButtons = styled.div`
  display: flex;
  gap: 4px;
  margin-left: auto;
`;

const FrameButton = styled.button`
  width: 15px;
  height: 15px;
  padding: 0;
  border: 0;
  border-radius: 1px;
  display: grid;
  place-items: center;
  background: ${(p) => (p.$close ? "#e2573c" : "linear-gradient(#666, #333)")};
`;

const ChildButton = styled(FrameButton)`
  width: 13px;
  height: 13px;
  border: 1px solid #777;
  border-radius: 3px;
  background: #f4f4f4;
`;

/* ---------- menus ---------- */

const MenuBar = styled.nav`
  display: flex;
  align-items: center;
  height: 22px;
  padding: 0 4px 2px 2px;
  background: #e5e5e5;
  border-bottom: 1px solid #c4c4c4;
`;

const Grip = styled.span`
  flex: none;
  width: ${(p) => (p.$flat ? "28px" : "4px")};
  height: ${(p) => (p.$flat ? "4px" : "18px")};
  background: radial-gradient(circle, #999 1px, transparent 1px) 0 0 / 3px 3px;
  opacity: 0.7;
`;

const MenuAnchor = styled.div`
  position: relative;
  display: flex;
`;

const MenuTitle = styled.button`
  height: 19px;
  padding: 0 4px;
  border: 1px solid ${(p) => (p.$open ? "#8b8b8b" : "transparent")};
  background: ${(p) => (p.$open ? "linear-gradient(#c2c2c2, #dadada)" : "none")};
  white-space: nowrap;
`;

const Menu = styled.div`
  position: absolute;
  z-index: 5;
  top: 100%;
  left: 0;
  width: 177px;
  padding: 1px;
  background: #ebebeb;
  border: 1px solid #7d7d7d;
`;

const SubMenu = styled(Menu)`
  top: 0;
  left: 100%;
  width: 156px;
`;

const MenuRow = styled.div`
  position: relative;
`;

const MenuItem = styled.button`
  display: grid;
  grid-template-columns: 29px 1fr auto 5px;
  align-items: center;
  width: 100%;
  height: 25px;
  padding: 0 5px 0 0;
  border: 0;
  text-align: left;
  white-space: nowrap;
  color: ${(p) => (p.$active ? "#eef4ff" : "#111")};
  background: ${(p) => (p.$active ? "#5591fb" : "none")};
`;

const IconSlot = styled.span`
  padding-left: 3px;
`;

const Shortcut = styled.span`
  margin-right: 4px;
`;

const Arrow = styled.i`
  border: solid transparent;
  border-width: 5px 0 5px 5px;
  border-left-color: ${(p) => (p.$active ? "#fff" : "#000")};
`;

const MenuLine = styled.hr`
  height: 1px;
  margin: 3px 7px 3px 8px;
  border: 0;
  background: #b9b9b9;
`;

const ClickHalo = styled.span`
  position: absolute;
  left: 46px;
  top: -24px;
  width: 48px;
  height: 48px;
  border-radius: 50%;
  background: #ebdd00;
  mix-blend-mode: multiply;
  pointer-events: none;
`;

const Pointer = styled.svg`
  position: absolute;
  left: 71px;
  top: 1px;
  width: 10px;
  height: 16px;
  pointer-events: none;
`;

/* ---------- toolbars ---------- */

const ToolArea = styled.div`
  background: linear-gradient(#e3e3e3, #cbcbcb);
  border-bottom: 1px solid #8f8f8f;
`;

const ToolRow = styled.div`
  display: flex;
  align-items: center;
  height: 28px;
`;

const Strip = styled.div`
  display: flex;
  align-items: center;
  justify-content: space-between;
  flex: none;
  height: 28px;
  width: ${(p) => p.$width}px;
  margin-left: ${(p) => p.$gap || 0}px;
  padding: 0 4px 0 3px;
  border-right: 1px solid ${(p) => (p.$open ? "transparent" : "#bdbdbd")};
  border-bottom: 1px solid ${(p) => (p.$open ? "transparent" : "#d9d9d9")};
`;

const ToolButton = styled.button`
  flex: none;
  display: flex;
  align-items: center;
  padding: 0;
  border: 0;
  background: none;
  white-space: nowrap;
  color: ${(p) => (p.$off ? "#9b9b9b" : "#111")};
`;

const ToggleButton = styled(ToolButton)`
  width: 25px;
  height: 24px;
  justify-content: center;
  background: #fff;
  border: 1px solid #777;
`;

const Caret = styled.i`
  flex: none;
  border: solid transparent;
  border-width: 3px 3px 0 3px;
  border-top-color: #111;
  align-self: ${(p) => (p.$end ? "flex-end" : "center")};
  margin-bottom: ${(p) => (p.$end ? "5px" : "0")};
`;

const RowCaret = styled(Caret)`
  margin-left: auto;
  margin-right: 4px;
`;

const Divider = styled.i`
  flex: none;
  width: 2px;
  height: 24px;
  border-left: 1px solid #bbb;
  border-right: 1px solid #f0f0f0;
`;

const SelectionBar = styled.div`
  display: flex;
  align-items: center;
  height: 27px;
  background: linear-gradient(#cfcfcf, #dcdcdc);
  border-bottom: 1px solid #f4f4f4;
`;

const Combo = styled.span`
  position: relative;
  flex: none;
  display: flex;
  width: ${(p) => p.$width}px;
  margin-left: 4px;
  border: 1px solid #999;
  background: #fff;

  select {
    appearance: none;
    flex: 1;
    min-width: 0;
    height: 13px;
    padding: 0 2px;
    border: 0;
    background: none;
    line-height: 13px;
  }

  i {
    width: 13px;
    display: grid;
    place-items: center;
    background: linear-gradient(#b8dcf6, #6aa8dc);
    pointer-events: none;
  }

  i::after {
    content: "";
    border: solid transparent;
    border-width: 5px 4px 0;
    border-top-color: #111;
  }
`;

const CueLine = styled.div`
  display: flex;
  align-items: center;
  height: 18px;
  padding-right: 4px;
  background: #d9d9d9;
`;

const CueText = styled.output`
  width: 633px;
  height: 16px;
  border-right: 2px solid #ececec;
`;

const StatusText = styled.output`
  flex: 1;
  height: 16px;
  margin-right: 28px;
  border-right: 2px solid #ececec;
`;

const CueSwatch = styled.span`
  width: 14px;
  height: 14px;
  margin-right: 3px;
  background: #929a9e;
`;

/* ---------- body ---------- */

const Body = styled.div`
  flex: 1;
  min-height: 0;
  display: flex;
`;

const ResourceBar = styled.aside`
  flex: none;
  width: 28px;
  padding: 15px 0 0 4px;
  background: linear-gradient(90deg, #a3a3a3, #bababa);
`;

const TabGroup = styled.div`
  display: flex;
  flex-direction: column;
  gap: 2px;
  height: ${(p) => p.$height}px;
  margin-bottom: 12px;
`;

const Tab = styled.button`
  flex: 1;
  display: grid;
  place-items: center;
  padding: 0;
  border: 1px solid #7c7c7c;
  border-right: 0;
  border-radius: 3px 0 0 3px;
  background: ${(p) => (p.$active ? "#ececec" : "#d0d0d0")};
`;

const Navigator = styled.section`
  flex: none;
  width: 371px;
  display: flex;
  flex-direction: column;
  padding: 0 8px 5px 7px;
  background: #ececec;
  border-right: 1px solid #777;
`;

const NavTitle = styled.h2`
  display: flex;
  align-items: center;
  gap: 12px;
  height: 26px;
  margin: 0;
  padding-left: 5px;
  font-size: 10px;
  font-weight: 700;
`;

const NavTable = styled.table`
  flex: 1;
  min-height: 0;
  display: flex;
  flex-direction: column;
  background: #fff;
  border: 1px solid #666;

  tbody {
    flex: 1;
    min-height: 0;
    display: flex;
    flex-direction: column;
  }

  tr {
    display: grid;
    grid-template-columns: 211px 83px 1fr;
  }

  th {
    height: 16px;
    padding: 0 6px;
    display: flex;
    align-items: center;
    gap: 14px;
    font-weight: 400;
    background: linear-gradient(#f4f4f4, #d2d2d2);
    border-right: 1px solid #bbb;
  }

  tbody tr {
    flex: 1;
    min-height: 0;
    border-bottom: 1px solid #ececec;
  }

  tbody tr:nth-child(even) {
    background: #f6f6f6;
  }

  td {
    min-width: 0;
    padding: 0;
    border-right: 1px solid #ececec;
  }
`;

const SortMark = styled.i`
  border: solid transparent;
  border-width: 0 4px 5px;
  border-bottom-color: #111;
`;

const TreeCell = styled.div`
  display: flex;
  align-items: center;
  gap: ${(p) => (p.$tick ? 2 : 3)}px;
  height: 100%;
  padding-left: ${(p) => 3 + p.$depth * 17}px;
  line-height: 14px;
  white-space: nowrap;
  color: #333;
`;

const Branch = styled.span`
  width: 10px;
  height: 16px;
  display: grid;
  place-items: center;
  background: repeating-linear-gradient(#b5b5b5 0 1px, transparent 1px 3px) center / 1px 100% no-repeat;
`;

const Expander = styled.button`
  width: 7px;
  height: 7px;
  padding: 0;
  border: 1px solid #999;
  display: grid;
  place-items: center;
  background: #fff;
  font-size: 8px;
  line-height: 5px;
`;

const Check = styled.input`
  appearance: none;
  position: relative;
  flex: none;
  width: 10px;
  height: 10px;
  border: 1px solid #222;
  background: #fff;

  &:checked::after {
    content: "";
    position: absolute;
    left: 2px;
    top: 0;
    width: 3px;
    height: 6px;
    border: solid #20962c;
    border-width: 0 2px 2px 0;
    transform: rotate(35deg);
  }
`;

const SplitHandle = styled.div`
  height: 10px;
  display: grid;
  place-items: center;

  &::after {
    content: "";
    width: 64px;
    height: 2px;
    background: #b0b0b0;
  }
`;

const Section = styled.button`
  display: flex;
  align-items: center;
  justify-content: space-between;
  height: 19px;
  padding: 0 0 0 5px;
  border: 0;
  border-bottom: 1px solid #b4b4b4;
  background: linear-gradient(#fdfdfd 30%, #d4d4d4);
  font-weight: 700;
`;

const SectionMark = styled.span`
  width: 20px;
  height: 100%;
  display: grid;
  place-items: center;
  border-left: 1px solid #a6a6a6;
  border-right: 1px solid #a6a6a6;
`;

const SideBar = styled.aside`
  flex: none;
  width: 38px;
  background: ${(p) => (p.$dark ? "#c6c6c6" : "#dedede")};
`;

const SideTools = styled.div`
  display: flex;
  flex-direction: column;
  align-items: center;
  padding: 1px 0;
  background: #dedede;
  border-bottom: 1px solid #c2c2c2;
`;

const SideRow = styled.div`
  position: relative;
  height: 26px;
  display: flex;
  align-items: center;
  padding-right: ${(p) => (p.$drop ? 8 : 0)}px;

  > i {
    position: absolute;
    left: 100%;
    margin-left: 1px;
  }
`;

const SideLine = styled.i`
  width: 32px;
  height: 1px;
  margin: 1px 0;
  background: #bbb;
`;

const BackCaret = styled.span`
  align-self: flex-start;
  margin: 1px 0 2px 5px;
  border: solid transparent;
  border-width: 3px 3px 3px 0;
  border-right-color: #111;
`;

const Viewport = styled.section`
  position: relative;
  flex: 1;
  min-width: 0;
  overflow: hidden;
  background: #333;
`;

const Scene = styled.svg`
  position: absolute;
  inset: 0;
  width: 100%;
  height: 100%;
`;

const Watermark = styled.figure`
  position: absolute;
  left: 126px;
  bottom: 0;
  width: 126px;
  height: 138px;
  margin: 0;
  padding-top: 5px;
  display: flex;
  flex-direction: column;
  align-items: center;
  background: #fff;
  color: #2c2420;

  svg {
    width: 56px;
    height: 78px;
  }

  strong {
    font-size: 23px;
    line-height: 34px;
    font-weight: 500;
  }

  small {
    font: 700 9px "Liberation Sans Narrow", "Liberation Sans", sans-serif;
    white-space: nowrap;
  }
`;

const Slogan = styled.p`
  position: absolute;
  left: ${(p) => p.$left}px;
  bottom: ${(p) => p.$bottom}px;
  margin: 0;
  color: #f2f2f2;
  font-size: 27px;
  font-weight: 300;
  line-height: 38px;
  white-space: nowrap;
`;

const BottomBar = styled.footer`
  display: flex;
  height: 28px;
  background: linear-gradient(#e2e2e2, #cbcbcb);
`;

/* ---------- data ---------- */

const menuTitles = [
  "文件(&F)", "编辑(&E)", "视图(&V)", "插入(&S)", "格式(&R)", "工具(&T)", "装配(&A)", "信息(&I)",
  "分析(&L)", "首选项(&P)", "窗口(&O)", "GC 工具箱", "星空  V6.936F", "帮助(&H)", "燕秀PM编程5.2",
  "燕秀CNC超级程式单1.3",
];

const surfaceMenu = [
  { icon: "fourPoint", text: "四点曲面(&F)...", keys: "Ctrl+4" },
  { icon: "globalShape", text: "整体突变(&S)..." },
  null,
  { icon: "throughPts", text: "通过点(&H)...", active: true, pointer: true },
  { icon: "fromPoles", text: "从极点(&O)..." },
  { icon: "fit", text: "拟合曲面(&C)..." },
  { icon: "rapid", text: "快速造面(&A)..." },
  null,
  { icon: "transition", text: "过渡(&T)..." },
  null,
  { icon: "bounded", text: "有界平面(&B)..." },
  null,
  { icon: "curveSheet", text: "曲线成片体(&E)..." },
  { icon: "ribbon", text: "条带构建器(&R)..." },
  null,
  { text: "中面(&M)", more: true },
  { icon: "patch", text: "修补开口(&P)..." },
];

const more = (text) => ({ text, more: true });

const insertMenu = [
  { icon: "sketch", text: "草图(&H)..." },
  { icon: "sketchTask", text: "在任务环境中绘制草图(&V)..." },
  more("草图曲线(&S)"),
  more("草图约束(&K)"),
  null,
  more("基准/点(&D)"),
  more("曲线(&C)"),
  more("来自曲线集的曲线(&F)"),
  more("来自体的曲线(&U)"),
  null,
  more("设计特征(&E)"),
  more("关联复制(&A)"),
  null,
  more("组合(&B)"),
  more("修剪(&T)"),
  more("偏置/缩放(&O)"),
  more("细节特征(&L)"),
  null,
  { text: "曲面(&R)", more: true, active: true, children: surfaceMenu },
  more("网格曲面(&M)"),
  more("扫掠(&W)"),
  more("弯边曲面(&G)"),
  null,
  more("同步建模(&Y)"),
  null,
  more("表格(&B)"),
  null,
  more("焊接助理(&N)"),
  more("结构焊接(&I)"),
  more("&BIW 定位器"),
];

// "v" drop-down caret, "." toolbar options caret, "|" divider, "#" grip, "+name" pressed toggle
const toolRows = [
  [
    { width: 145, open: true, items: "# nx @开始 v newFile open save" },
    { width: 128, gap: 170, items: "gear v | link boxes | info ." },
    { width: 232, items: "# target hat v sphere v board background v doorIn door ." },
    { width: 236, items: "# layers layers v wcs v | hand bulb | measure v ruler ." },
  ],
  [
    { width: 145, open: true, items: "# line v line arc rect spline" },
    { width: 90, gap: 178, items: "mirror cylinder cylinder ." },
    { width: 148, items: "# trimA trimB curveS offset bridge ." },
    { width: 134, items: "# boxMove boxRect boxCut boxWand v ." },
  ],
  [
    { width: 154, open: true, items: "# sketch finish ~完成草图 zigzag line" },
    { width: 393, gap: 177, items: "polyG v angleG blockG cutG trimG extG dimG v perpG frameG symG v gridG carG carG ." },
    { width: 134, gap: 22, items: "# orangeBlue | blueTilt orangeBoot | bluePair ." },
  ],
];

const selectionTools = [
  { width: 125, gap: 129, open: true, items: "filter v moveG stackG | marquee v" },
  { width: 373, open: true, items: "shaded blueCube +snap snapHand +line +midPoint controlPt crossPt +centerPt quadPt +plusPt +midPoint facePt | meshPt" },
];

const bottomTools = [
  { width: 472, open: true, items: "# abs xDim list back forward link boxes stamp purpleEx purpleSel rArc planes pivot stripes infoBox ramp redCube pinkFlag" },
  { width: 312, items: "bluePan blueSplit box v hexagon v axes redGrid purpleO textTool eraser lamp ring ." },
];

const tabGroups = [
  { height: 172, tabs: ["assembly", "constraint", "partNav", "reuse", "library"] },
  { height: 32, tabs: ["hd3d"] },
  { height: 33, tabs: ["web"] },
  { height: 242, tabs: ["clock", "palette", "process", "roles", "poster", "exit", "form"] },
];

const tree = [
  { icon: "history", text: "历史记录模式" },
  { icon: "modelView", text: "模型视图", sign: "+" },
  { icon: "camera", text: "摄像机", sign: "+", tick: true },
  { icon: "drawing", text: "图纸", sign: "+", tick: true },
  { icon: "folder", text: "用户表达式" },
  { icon: "folder", text: "组", sign: "+" },
  { icon: "folder", text: "模型历史记录", sign: "-" },
  { icon: "csys", text: "基准坐标系", depth: 1 },
  { icon: "bluePillar", text: "圆柱 (1)", depth: 1 },
  { icon: "sketchNode", text: '草图 (2) "S', depth: 1 },
];

const treeRows = Array.from({ length: 45 }, (_, i) => tree[i]);

/* ---------- components ---------- */

function Mnemonic({ text }) {
  const at = text.indexOf("&");
  if (at < 0) return <span>{text}</span>;
  return (
    <span>
      {text.slice(0, at)}
      <u>{text[at + 1]}</u>
      {text.slice(at + 2)}
    </span>
  );
}

function MenuList({ items }) {
  return items.map((item, i) =>
    item ? (
      <MenuRow key={item.text}>
        <MenuItem $active={item.active}>
          <IconSlot>{item.icon && <Icon name={item.icon} />}</IconSlot>
          <Mnemonic text={item.text} />
          <Shortcut>{item.keys}</Shortcut>
          {item.more && <Arrow $active={item.active} />}
        </MenuItem>
        {item.pointer && (
          <>
            <ClickHalo />
            <Pointer viewBox="0 0 10 16">
              <path d="M0 0V13L3 10 5 15 7 14 5 9H9Z" fill="#fff" stroke="#444" strokeWidth="0.6" />
            </Pointer>
          </>
        )}
        {item.children && (
          <SubMenu>
            <MenuList items={item.children} />
          </SubMenu>
        )}
      </MenuRow>
    ) : (
      <MenuLine key={i} />
    )
  );
}

function Tool({ token }) {
  if (token === "#") return <Grip />;
  if (token === "|") return <Divider />;
  if (token === "v") return <Caret />;
  if (token === ".") return <Caret $end />;
  if (token[0] === "@") return <ToolButton>{token.slice(1)}</ToolButton>;
  if (token[0] === "~") return <ToolButton $off>{token.slice(1)}</ToolButton>;
  if (token[0] === "+") {
    return (
      <ToggleButton aria-label={token.slice(1)} aria-pressed="true">
        <Icon name={token.slice(1)} />
      </ToggleButton>
    );
  }
  return (
    <ToolButton aria-label={token}>
      <Icon name={token} />
    </ToolButton>
  );
}

function Strips({ strips }) {
  return strips.map((s) => (
    <Strip key={s.items} $width={s.width} $gap={s.gap} $open={s.open}>
      {s.items.split(" ").map((token, i) => (
        <Tool key={i} token={token} />
      ))}
    </Strip>
  ));
}

function PartNavigator() {
  return (
    <Navigator>
      <NavTitle>
        <Svg viewBox="0 0 10 10" $size={9}>
          <path d="M1 9 3 7M3 3 5 1H9V5L7 8H4L3 6ZM4 5 6 6 8 3" fill="#fff" stroke="#222" strokeWidth="1.200" />
        </Svg>
        部件导航器
      </NavTitle>
      <NavTable>
        <thead>
          <tr>
            <th>名称 <SortMark /></th>
            <th />
            <th />
          </tr>
        </thead>
        <tbody>
          {treeRows.map((row, i) => (
            <tr key={i}>
              <td>
                {row && (
                  <TreeCell $depth={row.depth || 0} $tick={row.tick}>
                    <Branch>{row.sign && <Expander aria-label={row.text}>{row.sign}</Expander>}</Branch>
                    {row.tick && <Icon name="tick" size={12} />}
                    {row.depth && <Check type="checkbox" defaultChecked aria-label={row.text} />}
                    <Icon name={row.icon} size={13} />
                    {row.text}
                  </TreeCell>
                )}
              </td>
              <td />
              <td />
            </tr>
          ))}
        </tbody>
      </NavTable>
      <SplitHandle />
      {["相依性", "细节", "预览"].map((name) => (
        <Section key={name}>
          {name}
          <SectionMark>
            <Svg viewBox="0 0 10 10" $size={10}>
              <path d="M1 1 5 8 9 1" fill="none" stroke="#555" strokeWidth="2" />
            </Svg>
          </SectionMark>
        </Section>
      ))}
    </Navigator>
  );
}

function ModelView() {
  return (
    <Viewport>
      <Scene>
        <defs>
          <linearGradient id="brass">
            <stop offset="0" stopColor="#8a5710" />
            <stop offset="0.13" stopColor="#a56a1a" />
            <stop offset="0.2" stopColor="#c98630" />
            <stop offset="0.28" stopColor="#f2a846" />
            <stop offset="0.42" stopColor="#fbc457" />
            <stop offset="0.52" stopColor="#fed566" />
            <stop offset="0.65" stopColor="#fdd162" />
            <stop offset="0.78" stopColor="#f9b64d" />
            <stop offset="0.88" stopColor="#d8953a" />
            <stop offset="0.95" stopColor="#b87a22" />
            <stop offset="1" stopColor="#9a6414" />
          </linearGradient>
        </defs>
        <path d="M299 136Q361 132 423 136V550H299Z" fill="url(#brass)" />
        <path d="M298 134V550" stroke="#47477c" />
        <path d="M241 550H300" stroke="#20208a" />
        <path d="M251 550 262 547 265 550 262 553Z" fill="#0808d0" />
        <path d="M305 550V494H360" fill="none" stroke="#e6c07a" />
        <path d="M299 550H360" stroke="#c8d8b8" strokeWidth="2" />
        <path d="M318 543 324 541M318 545H328" stroke="#7c9a30" />
        <path d="M361 430V550" stroke="#d8c49a" />
        <path d="M361 440 364 452H358Z" fill="#a8a8ae" />
        <path d="M361 520V550" stroke="#d4dcf4" strokeWidth="2" />
        <path d="M361 508 363 520 361 536 359 520Z" fill="#5c86c8" />
        <text x="365" y="502" fontSize="10" fill="#5d6684">ZC</text>
        <text x="362" y="549" fontSize="10" fill="#b08838">XC</text>
        <path d="M36 773H60V797H36Z" fill="#a4a4a4" />
        <path d="M18 798H60" stroke="#1c8a24" strokeWidth="2" />
        <path d="M14 801Q9 798 13 794" fill="none" stroke="#46604a" />
        <path d="M62 752V797" stroke="#2a3acc" strokeWidth="2" />
        <circle cx="62" cy="798" r="2" fill="#e8c0c0" />
      </Scene>
      <Watermark>
        <svg viewBox="0 0 56 78">
          <defs>
            <linearGradient id="wave" x1="0" y1="0" x2="0" y2="1">
              <stop offset="0" stopColor="#2aa6dc" />
              <stop offset="0.45" stopColor="#1467b4" />
              <stop offset="1" stopColor="#152a78" />
            </linearGradient>
          </defs>
          <ellipse cx="17" cy="12" rx="6" ry="9" fill="#f2641c" />
          <path
            d="M26 5 30 4Q28 1 32 1L39 1 36 4Q52 8 51 28Q50 48 38 60Q46 66 55 61Q51 73 42 76Q32 73 24 68Q17 65 13 70Q15 64 20 63Q0 58 1 42Q4 20 24 22Q34 22 39 28Q30 23 22 27Q9 31 10 46Q12 58 29 60Q46 50 46 28Q45 10 34 7Z"
            fill="url(#wave)"
          />
          <path d="M26 26Q37 44 32 59L26 60ZM24 38V60Q16 57 17 51Q19 44 24 38Z" fill="#1a4c9c" />
          <path d="M15 73Q22 68 31 74Q37 78 44 77Q35 80 27 76Q21 73 15 73Z" fill="#1d3c8c" />
        </svg>
        <strong>千言教育</strong>
        <small>QIANYAN EDUCATION</small>
      </Watermark>
      <Slogan $left={293} $bottom={46}>没有激流则谈不上勇进，</Slogan>
      <Slogan $left={484} $bottom={7}>没有山峰则谈不上攀登。</Slogan>
    </Viewport>
  );
}

function App() {
  return (
    <Screen>
      <GlobalStyle />
      <Window>
        <TitleBar>
          <Icon name="nx" size={13} />
          <Title>NX 8.5.0.23 - 建模 - [_model1.prt （修改的） ]</Title>
          <Brand>SIEMENS</Brand>
          <FrameButtons>
            <FrameButton aria-label="最小化">
              <Svg viewBox="0 0 10 10" $size={11}><path d="M1 7H6V9H1Z" fill="#fff" /></Svg>
            </FrameButton>
            <FrameButton aria-label="最大化">
              <Svg viewBox="0 0 10 10" $size={11}><path d="M1 2H9V9H1ZM1 1.500H9" fill="none" stroke="#fff" strokeWidth="1.300" /></Svg>
            </FrameButton>
            <FrameButton $close aria-label="关闭">
              <Svg viewBox="0 0 10 10" $size={11}><path d="M1 1 9 9M9 1 1 9" stroke="#fff" strokeWidth="1.800" /></Svg>
            </FrameButton>
          </FrameButtons>
        </TitleBar>
        <MenuBar>
          <Grip />
          <Icon name="part" size={14} />
          {menuTitles.map((text, i) => (
            <MenuAnchor key={text}>
              <MenuTitle $open={i === 3}>
                <Mnemonic text={text} />
              </MenuTitle>
              {i === 3 && (
                <Menu>
                  <MenuList items={insertMenu} />
                </Menu>
              )}
            </MenuAnchor>
          ))}
          <FrameButtons>
            <ChildButton aria-label="最小化子窗口">
              <Svg viewBox="0 0 10 10" $size={9}><path d="M1 7H6V9H1Z" fill="#555" /></Svg>
            </ChildButton>
            <ChildButton aria-label="还原子窗口">
              <Svg viewBox="0 0 10 10" $size={9}><path d="M3 1H9V5H3ZM1 4H7V8H1Z" fill="#eee" stroke="#555" /></Svg>
            </ChildButton>
            <ChildButton aria-label="关闭子窗口">
              <Svg viewBox="0 0 10 10" $size={9}><path d="M2 2 8 8M8 2 2 8" stroke="#555" strokeWidth="2" /></Svg>
            </ChildButton>
          </FrameButtons>
        </MenuBar>
        <ToolArea>
          {toolRows.map((strips, i) => (
            <ToolRow key={i}>
              <Strips strips={strips} />
            </ToolRow>
          ))}
        </ToolArea>
        <SelectionBar>
          <Combo $width={120}>
            <select aria-label="过滤器"><option>没有选择过滤器</option></select>
            <i />
          </Combo>
          <Combo $width={60}>
            <select aria-label="范围"><option>整个装配</option></select>
            <i />
          </Combo>
          <Strips strips={selectionTools} />
          <RowCaret $end />
        </SelectionBar>
        <CueLine>
          <CueText />
          <StatusText />
          <CueSwatch />
          <Icon name="cueView" size={14} />
        </CueLine>
        <Body>
          <ResourceBar>
            {tabGroups.map((group) => (
              <TabGroup key={group.tabs[0]} $height={group.height}>
                {group.tabs.map((name) => (
                  <Tab key={name} $active={name === "partNav"} aria-label={name}>
                    <Icon name={name} size={19} />
                  </Tab>
                ))}
              </TabGroup>
            ))}
          </ResourceBar>
          <PartNavigator />
          <SideBar $dark>
            <SideTools>
              <Grip $flat />
              <SideRow $drop><Tool token="plane" /><Caret /></SideRow>
              <SideRow><Tool token="orangeDrum" /></SideRow>
              <SideRow><Tool token="revolve" /></SideRow>
              <SideRow><Tool token="hole" /></SideRow>
              <SideRow><Tool token="thread" /></SideRow>
              <SideLine />
              <SideRow><Tool token="emboss" /></SideRow>
              <SideRow><Tool token="pattern" /></SideRow>
              <SideRow><Tool token="bluePair" /></SideRow>
              <SideRow $drop><Tool token="unite" /><Caret /></SideRow>
            </SideTools>
          </SideBar>
          <ModelView />
          <SideBar>
            <SideTools>
              <Grip $flat />
              <SideRow><Tool token="fourPoint" /></SideRow>
              <SideRow><Tool token="ruled" /></SideRow>
              <SideRow><Tool token="through" /></SideRow>
              <SideRow><Tool token="section" /></SideRow>
              <SideRow $drop><Tool token="sweep" /><Caret /></SideRow>
              <SideRow><Tool token="sweep" /></SideRow>
              <SideRow><Tool token="redMesh" /></SideRow>
              <BackCaret />
            </SideTools>
            <SideTools>
              <Grip $flat />
              <SideRow><Tool token="offsetSurf" /></SideRow>
              <BackCaret />
            </SideTools>
            <SideTools>
              <Grip $flat />
              <SideRow><Tool token="xDim" /></SideRow>
              <BackCaret />
            </SideTools>
          </SideBar>
        </Body>
        <BottomBar>
          <Strips strips={bottomTools} />
        </BottomBar>
      </Window>
    </Screen>
  );
}

export default App;
